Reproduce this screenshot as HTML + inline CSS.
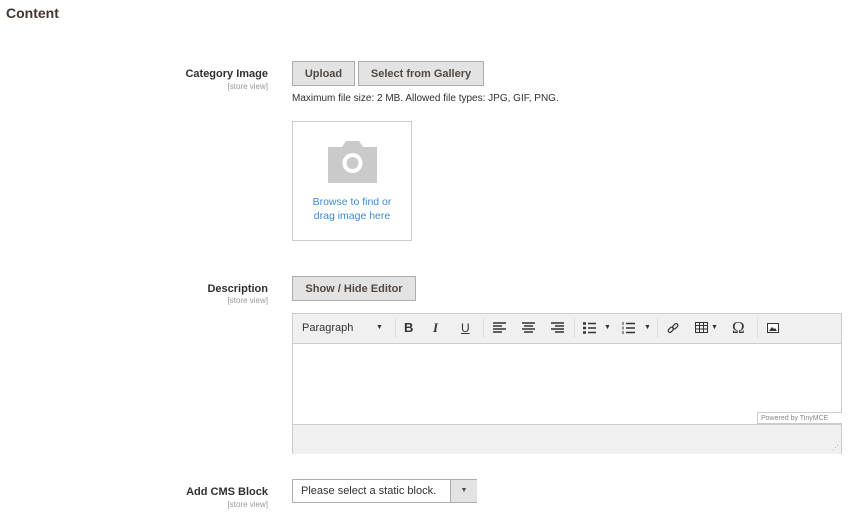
<!DOCTYPE html>
<html><head><style>
body{margin:0;width:850px;height:512px;background:#fff;font-family:"Liberation Sans",sans-serif;position:relative;overflow:hidden;color:#303030}
.a{position:absolute}
.lbl{position:absolute;right:582px;text-align:right;font-size:11px;font-weight:bold;color:#303030}
.sv{position:absolute;right:582px;font-size:8px;color:#999}
.btn{position:absolute;background:#e3e3e3;border:1px solid #adadad;box-sizing:border-box;font-size:11px;font-weight:bold;color:#514943;text-align:center;line-height:24px}
.ti{position:absolute;top:313px;height:30px;line-height:30px;font-size:12px;color:#333;text-align:center}
.sep{position:absolute;top:318px;width:1px;height:20px;background:#ddd}
svg.i{position:absolute;top:322px}
</style></head><body>
<div class="a" style="left:6px;top:5px;font-size:14px;font-weight:bold;color:#41362f">Content</div>

<div class="lbl" style="top:68px">Category Image</div>
<div class="sv" style="top:82px">[store view]</div>
<div class="btn" style="left:292px;top:61px;width:63px;height:25px">Upload</div>
<div class="btn" style="left:358px;top:61px;width:126px;height:25px">Select from Gallery</div>
<div class="a" style="left:292px;top:93px;font-size:10px;color:#303030">Maximum file size: 2 MB. Allowed file types: JPG, GIF, PNG.</div>
<div class="a" style="left:292px;top:121px;width:120px;height:120px;border:1px solid #ccc;box-sizing:border-box"></div>
<svg class="a" style="left:328px;top:141px" width="49" height="42" viewBox="0 0 49 42"><path d="M14 6 L18 0 H31 L35 6 H49 V42 H0 V6 Z" fill="#cacaca"/><circle cx="24.5" cy="22" r="10" fill="#fff"/><circle cx="24.5" cy="22" r="6" fill="#cacaca"/></svg>
<div class="a" style="left:292px;top:195px;width:120px;text-align:center;font-size:10.5px;line-height:14px;color:#3d8ad1">Browse to find or<br>drag image here</div>

<div class="lbl" style="top:283px">Description</div>
<div class="sv" style="top:296px">[store view]</div>
<div class="btn" style="left:292px;top:276px;width:124px;height:25px">Show / Hide Editor</div>

<div class="a" style="left:292px;top:313px;width:550px;height:141px;border:1px solid #ccc;box-sizing:border-box;background:#fff"></div>
<div class="a" style="left:293px;top:314px;width:548px;height:29px;background:#f0f0f0;border-bottom:1px solid #ccc"></div>
<div class="a" style="left:293px;top:424px;width:548px;height:29px;background:#f0f0f0;border-top:1px solid #ccc"></div>
<div class="a" style="left:757px;top:412px;width:85px;height:12px;border:1px solid #ccc;border-right:0;box-sizing:border-box;background:#fff;font-size:7px;color:#888;line-height:11px;padding-left:3px">Powered by TinyMCE</div>
<div class="a" style="left:832px;top:444px;font-size:7px;color:#999">⋰</div>

<div class="ti" style="left:302px;font-size:11px">Paragraph</div>
<div class="ti" style="left:376px;font-size:7px">▼</div>
<div class="sep" style="left:395px"></div>
<div class="ti" style="left:404px;font-weight:bold;font-size:13px">B</div>
<div class="ti" style="left:433px;font-style:italic;font-weight:bold;font-size:13px;font-family:'Liberation Serif',serif">I</div>
<div class="ti" style="left:461px;text-decoration:underline;font-size:12px">U</div>
<div class="sep" style="left:483px"></div>
<svg class="i" style="left:493px" width="13" height="12"><path d="M0 1H13M0 4H9M0 7H13M0 10H9" stroke="#333" stroke-width="1.6"/></svg>
<svg class="i" style="left:522px" width="13" height="12"><path d="M0 1H13M2 4H11M0 7H13M2 10H11" stroke="#333" stroke-width="1.6"/></svg>
<svg class="i" style="left:551px" width="13" height="12"><path d="M0 1H13M4 4H13M0 7H13M4 10H13" stroke="#333" stroke-width="1.6"/></svg>
<div class="sep" style="left:574px"></div>
<svg class="i" style="left:583px" width="13" height="12"><path d="M0 1.5H3M0 6H3M0 10.5H3" stroke="#333" stroke-width="2.5"/><path d="M5 1.5H13M5 6H13M5 10.5H13" stroke="#333" stroke-width="1.4"/></svg>
<div class="ti" style="left:604px;font-size:7px">▼</div>
<svg class="i" style="left:622px" width="13" height="12"><path d="M1 0V3M1 4.5V7.5M1 9V12" stroke="#333" stroke-width="1"/><path d="M4 1.5H13M4 6H13M4 10.5H13" stroke="#333" stroke-width="1.4"/></svg>
<div class="ti" style="left:644px;font-size:7px">▼</div>
<div class="sep" style="left:657px"></div>
<svg class="i" style="left:667px" width="12" height="12"><rect x="0.8" y="6" width="6" height="3.5" rx="1.7" transform="rotate(-45 3.8 7.7)" fill="none" stroke="#333" stroke-width="1.2"/><rect x="5.2" y="2.5" width="6" height="3.5" rx="1.7" transform="rotate(-45 8.2 4.2)" fill="none" stroke="#333" stroke-width="1.2"/></svg>
<svg class="i" style="left:695px" width="13" height="11"><rect x="0.5" y="0.5" width="12" height="10" fill="none" stroke="#333"/><path d="M0 3.5H13M0 7H13M4.5 0V11M8.5 0V11" stroke="#333"/></svg>
<div class="ti" style="left:711px;font-size:7px">▼</div>
<div class="ti" style="left:732px;font-size:17px;font-family:'Liberation Serif',serif">Ω</div>
<div class="sep" style="left:757px"></div>
<svg class="i" style="left:767px;top:323px" width="12" height="10"><rect x="0.5" y="0.5" width="11" height="9" fill="#fff" stroke="#333"/><path d="M2 8L5 4L7 6L8 5L10 8Z" fill="#333"/></svg>

<div class="lbl" style="top:486px">Add CMS Block</div>
<div class="sv" style="top:500px">[store view]</div>
<div class="a" style="left:292px;top:479px;width:185px;height:24px;border:1px solid #adadad;box-sizing:border-box;font-size:11px;line-height:22px;padding-left:8px;color:#303030">Please select a static block.</div>
<div class="a" style="left:450px;top:480px;width:26px;height:22px;background:#e3e3e3;border-left:1px solid #adadad;font-size:7px;text-align:center;line-height:22px;color:#514943">▼</div>
</body></html>
